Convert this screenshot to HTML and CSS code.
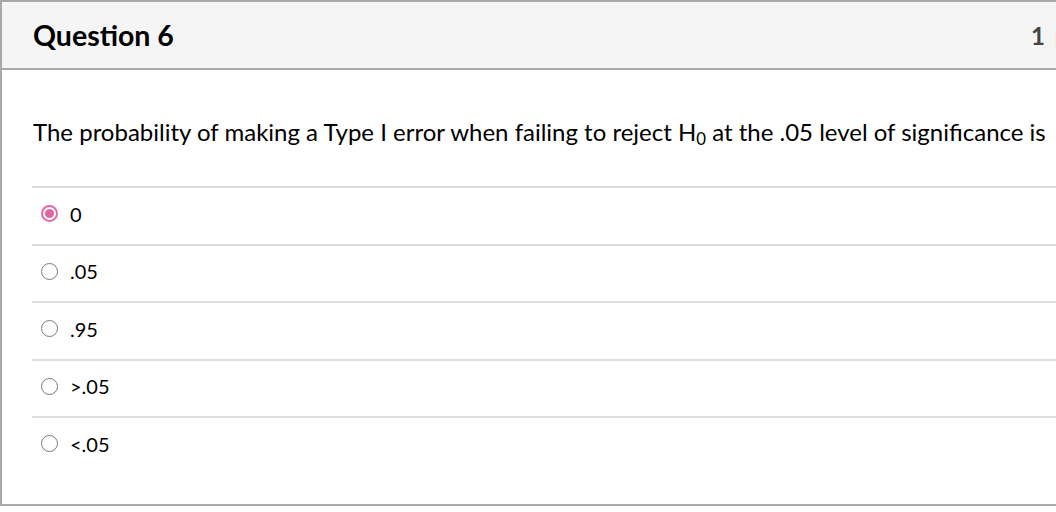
FILE: index.html
```html
<!DOCTYPE html>
<html>
<head>
<meta charset="utf-8">
<link rel="stylesheet" href="styles.css">
</head>
<body>
<div class="question">
  <div class="header">
    <h2 class="title">Question 6</h2>
    <span class="points">1 pts</span>
  </div>
  <div class="content">
    <p class="text">The probability of making a Type I error when failing to reject H<sub>0</sub> at the .05 level of significance is</p>
    <div class="answers">
      <label class="answer"><span class="radio checked"></span><span class="label">0</span></label>
      <label class="answer"><span class="radio"></span><span class="label">.05</span></label>
      <label class="answer"><span class="radio"></span><span class="label">.95</span></label>
      <label class="answer"><span class="radio"></span><span class="label">&gt;.05</span></label>
      <label class="answer"><span class="radio"></span><span class="label">&lt;.05</span></label>
    </div>
  </div>
</div>
</body>
</html>
```
FILE: styles.css
```css
html, body {
  margin: 0;
  padding: 0;
  background: #fff;
  overflow: hidden;
}
body {
  font-family: Lato, "Liberation Sans", sans-serif;
  color: #000;
  width: 1056px;
  height: 512px;
}
.question {
  width: 1140px;
  height: 502px;
  border: 2px solid #a9a9a9;
  border-right: none;
}
.header {
  height: 66px;
  background: #f5f5f5;
  border-bottom: 2px solid #a9a9a9;
  display: flex;
  align-items: center;
  padding-left: 31px;
}
.title {
  margin: 0;
  font-size: 28.5px;
  font-weight: 700;
  flex: 1;
}
.points {
  width: 111px;
  font-size: 24px;
  font-weight: 700;
  color: #444;
  word-spacing: 4px;
}
.content {
  padding: 0 0 0 30px;
}
.text {
  margin: 0;
  padding: 46px 0 0 1px;
  font-size: 24px;
  line-height: 32px;
  white-space: nowrap;
}
.text sub {
  font-size: 70%;
  vertical-align: -4px;
  line-height: 0;
}
.answers {
  margin-top: 38px;
  border-top: 2px solid #dedede;
}
.answer {
  display: flex;
  align-items: center;
  height: 51px;
  padding-bottom: 4.5px;
  border-bottom: 2px solid #dedede;
  padding-left: 9px;
  font-size: 20px;
}
.answer:last-child {
  border-bottom: none;
}
.radio {
  width: 15px;
  height: 15px;
  border: 1px solid #777;
  border-radius: 50%;
  box-sizing: content-box;
  margin-right: 12px;
  position: relative;
}
.radio.checked {
  border: 2px solid #e66aa6;
  width: 13px;
  height: 13px;
}
.radio.checked::after {
  content: "";
  position: absolute;
  left: 2px;
  top: 2px;
  width: 9px;
  height: 9px;
  border-radius: 50%;
  background: #e066a3;
}
.label {
  line-height: 1;
}
```
